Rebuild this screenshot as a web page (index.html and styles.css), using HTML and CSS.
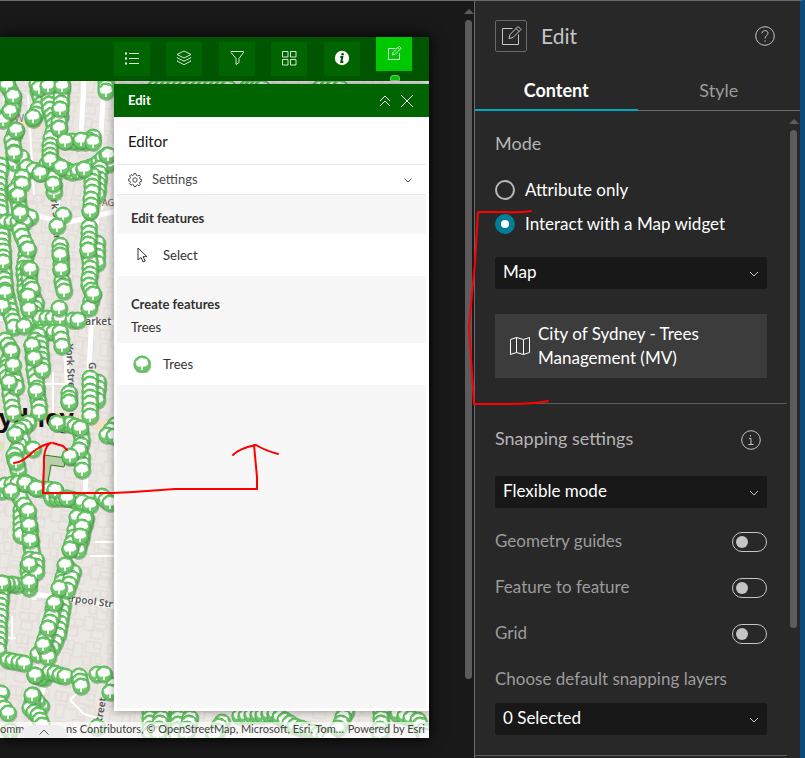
FILE: index.html
```html
<!DOCTYPE html>
<html lang="en">
<head>
    <meta charset="UTF-8">
    <meta name="viewport" content="width=device-width, initial-scale=1.0">
    <title>Edit widget settings</title>
    <link rel="stylesheet" href="styles.css">
</head>
<body>
    <main class="canvas">
        <div class="app">
            <header class="app-header">
                <nav class="toolbar">
                    <button type="button" class="tool" aria-label="Legend">
                        <svg width="16" height="16" viewBox="0 0 16 16"><path d="M5 3.500h10M5 8.500h10M5 13.500h10"/><path class="solid" d="M1 2.500h2v2H1zM1 7.500h2v2H1zM1 12.500h2v2H1z"/></svg>
                    </button>
                    <button type="button" class="tool" aria-label="Layers">
                        <svg width="16" height="16" viewBox="0 0 16 16"><path d="M8 1l7 3.500-7 3.500-7-3.500zM1.500 7.200L1 7.700l7 3.500 7-3.500-.5-.5M1.500 10.500l-.5.500 7 3.700 7-3.700-.5-.5"/></svg>
                    </button>
                    <button type="button" class="tool" aria-label="Filter">
                        <svg width="16" height="16" viewBox="0 0 16 16"><path d="M2 1.500h12.500v1L10 8.500v4l-3 2v-6L2 2.500z"/></svg>
                    </button>
                    <button type="button" class="tool" aria-label="Basemaps">
                        <svg width="16" height="16" viewBox="0 0 16 16"><path d="M1.500 1.500h5.500v5.500H1.500zM9.500 1.500H15v5.500H9.500zM1.500 9.500h5.500V15H1.500zM9.500 9.500H15V15H9.500z"/></svg>
                    </button>
                    <button type="button" class="tool" aria-label="About">
                        <svg width="16" height="16" viewBox="0 0 16 16"><circle class="info-disc" cx="8" cy="8" r="7.200"/><circle class="info-mark" cx="8.600" cy="4.300" r="1.300"/><path class="info-stem" d="M6.300 7h2l-1 5h2"/></svg>
                    </button>
                    <button type="button" class="tool active" aria-label="Edit">
                        <svg width="16" height="16" viewBox="0 0 16 16"><path d="M9.500 3.500H2.500v11h11V8M6.500 10l.7-2.800 6-6 2 2-6 6zM11.800 2.600l2 2"/></svg>
                    </button>
                </nav>
            </header>

            <section class="map">
                <svg class="map-view" viewBox="0 81 429 657" preserveAspectRatio="xMinYMin slice" aria-label="Map of Sydney trees">
                    <defs>
                        <pattern id="blocks" width="46" height="52" patternUnits="userSpaceOnUse" patternTransform="rotate(7)">
                            <path d="M2 3h12v9H2zM14 5h9v14h-9zM26 2h15v11H26zM4 16h8v13H4zM25 17h7v9h-7zM33 15h10v16H33zM3 33h17v7H3zM22 29h9v14h-9zM5 42h11v8H5zM33 35h11v5H33zM30 42h12v8H30zM8 3v9M34 2v6h7M37 15v8h6M12 33v7"/>
                        </pattern>
                        <g id="tree">
                            <circle class="tree-shade" cx=".5" cy="1" r="9"/>
                            <circle class="tree-disc" r="8"/>
                            <path class="tree-glyph" d="M-.9 6V2.200C-3.500 3.500-6 2-5.700 0-7-1.500-5.700-3.500-4-3.700-3.300-6 .6-6.800 2.300-5 4.600-5.600 6-4 5.400-2.200 7-.9 6 1.600 4 1.700 3.200 2.700 2 2.900.9 2.200V6z"/>
                        </g>
                    </defs>
                    <rect class="ground" y="81" width="429" height="657"/>
                    <rect class="buildings" y="81" width="429" height="657"/>
                    <path class="avenue" d="M0 418q60-10 114 12M0 118l42 8"/>
                    <path class="road" d="M-5 205l70 18 60-14M-5 318l130 5M4 81l12 130M48 81l10 130 8 140 2 60M84 81l-3 55M104 81l-5 90-10 200-4 130M0 490l60 8 60 6M28 500l6 100M18 592l60 8 45 8M86 500l-36 160-20 80M-4 660l60 12 70 14"/>
                    <path class="lane" d="M28 95l6 100M53 372v60M40 384h30M110 150l-8 60M12 616v24M6 638h10M90 556h25M95 542h25M70 700l14 14 20 6M70 700l12-12"/>
                    <path class="parkland" d="M44 455l22 3-2 9-13-2-3 17-5-1z"/>
                    <path class="lawn" d="M0 440l4 2v9H0z"/>
                    <text class="district" x="14" y="122">W</text>
                    <text class="district" x="62" y="122">D</text>
                    <text class="landmark" x="102" y="206">AG</text>
                    <text class="city" x="-15" y="427">Sydney</text>
                    <text class="street" transform="translate(49 188) rotate(82)">York St</text>
                    <text class="street" transform="translate(52 226) rotate(80)">Street</text>
                    <text class="street" transform="translate(66 344) rotate(87)">York Street</text>
                    <text class="street" transform="translate(89 362) rotate(92)">George</text>
                    <text class="street" x="76" y="325">Market St</text>
                    <text class="street" transform="translate(51 599) rotate(8)">Liverpool Str</text>
                    <text class="street" transform="translate(101 727) rotate(-80)">Street</text>
                    <g id="trees"></g>
                </svg>

                <section class="panel">
                    <header class="panel-header">
                        <h2>Edit</h2>
                        <button type="button" class="panel-button" aria-label="Collapse">
                            <svg width="14" height="14" viewBox="0 0 14 14"><path d="M2 7l5-5 5 5M2 12l5-5 5 5"/></svg>
                        </button>
                        <button type="button" class="panel-button" aria-label="Close">
                            <svg width="14" height="14" viewBox="0 0 14 14"><path d="M1 1l12 12M13 1L1 13"/></svg>
                        </button>
                    </header>
                    <div class="editor">
                        <h3 class="editor-title">Editor</h3>
                        <button type="button" class="settings">
                            <svg width="14" height="14" viewBox="0 0 14 14"><circle cx="7" cy="7" r="2.200"/><path d="M6 .700h2l.4 1.700 1.200.500 1.500-.9 1.300 1.400-.9 1.500.5 1.100 1.600.4v1.900l-1.600.4-.5 1.200.9 1.500-1.400 1.300-1.500-.9-1.100.5L8 13.500H6l-.4-1.700-1.200-.500-1.500.9-1.300-1.400.9-1.500L2 8.200.4 7.800V6.100L2 5.700l.5-1.200L1.600 3 3 1.600l1.500.9 1.100-.500z"/></svg>
                            <span>Settings</span>
                            <svg width="10" height="10" viewBox="0 0 10 10"><path d="M1.500 3.500L5 7l3.500-3.500"/></svg>
                        </button>
                        <h4 class="group-title">Edit features</h4>
                        <button type="button" class="feature">
                            <svg width="18" height="18" viewBox="0 0 18 18"><path d="M5 2v12l3-2.500 2.200 4.500 2-1-2.200-4.300H14z"/></svg>
                            Select
                        </button>
                        <h4 class="group-title create">Create features</h4>
                        <p class="layer-name">Trees</p>
                        <button type="button" class="feature">
                            <svg class="tree-icon" width="18" height="18" viewBox="-9 -9 18 18"><use href="#tree"/></svg>
                            Trees
                        </button>
                    </div>
                </section>

                <footer class="attribution">
                    <span class="source-start">omm</span>
                    <span class="sources">ns Contributors, © OpenStreetMap, Microsoft, Esri, Tom…</span>
                    <span>Powered by Esri</span>
                </footer>
                <button type="button" class="drawer" aria-label="Expand">
                    <svg width="12" height="8" viewBox="0 0 12 8"><path d="M1.500 6.500L6 2l4.500 4.500"/></svg>
                </button>
            </section>
        </div>
        <div class="scrollbar canvas-scroll"><div class="thumb"></div></div>
    </main>

    <aside class="sidebar">
        <header class="sidebar-header">
            <span class="widget-icon">
                <svg width="22" height="22" viewBox="0 0 22 22"><path d="M12.500 3.500h-10v16h16v-10M9 13.500l1-4 8-8 3 3-8 8zM16 3.500l3 3"/></svg>
            </span>
            <h1>Edit</h1>
            <button type="button" class="round-button" aria-label="Help">
                <svg width="20" height="20" viewBox="0 0 20 20"><circle cx="10" cy="10" r="9.300"/><path d="M7 7.500c0-4 6-3.800 6-.3 0 2.300-3 2.500-3 5.300M10 14.300v1.500"/></svg>
            </button>
        </header>
        <div class="tabs" role="tablist">
            <button type="button" class="tab selected" role="tab" aria-selected="true">Content</button>
            <button type="button" class="tab" role="tab" aria-selected="false">Style</button>
        </div>
        <div class="sidebar-body">
            <form class="options">
                <section class="block">
                    <h2 class="block-title">Mode</h2>
                    <label class="radio"><input type="radio" name="mode"><span>Attribute only</span></label>
                    <label class="radio"><input type="radio" name="mode" checked><span>Interact with a Map widget</span></label>
                    <select class="dropdown map-select" aria-label="Map widget">
                        <option>Map</option>
                    </select>
                    <div class="map-card">
                        <svg width="20" height="18" viewBox="0 0 20 18"><path d="M.5 2.500l6-2 7 2 6-2v15l-6 2-7-2-6 2zM6.500.5v15M13.500 2.500v15"/></svg>
                        <span>City of Sydney - Trees Management (MV)</span>
                    </div>
                </section>
                <section class="block">
                    <div class="title-row">
                        <h2 class="block-title">Snapping settings</h2>
                        <button type="button" class="round-button" aria-label="About snapping">
                            <svg width="20" height="20" viewBox="0 0 20 20"><circle cx="10" cy="10" r="9.300"/><path d="M8 8.500h2v6M7.500 14.500h5M9.500 5v1.500"/></svg>
                        </button>
                    </div>
                    <select class="dropdown" aria-label="Snapping mode">
                        <option>Flexible mode</option>
                    </select>
                    <div class="switches">
                        <label class="switch-row"><span>Geometry guides</span><input type="checkbox" class="switch"></label>
                        <label class="switch-row"><span>Feature to feature</span><input type="checkbox" class="switch"></label>
                        <label class="switch-row"><span>Grid</span><input type="checkbox" class="switch"></label>
                    </div>
                    <label class="field-label" for="layers">Choose default snapping layers</label>
                    <select class="dropdown" id="layers">
                        <option>0 Selected</option>
                    </select>
                </section>
            </form>
            <div class="scrollbar"><div class="thumb"></div></div>
        </div>
    </aside>

    <svg class="markup" width="805" height="758" viewBox="0 0 805 758" aria-hidden="true">
        <path d="M14 463q8 0 20-12 10-7 17-8M53 443l10 3 4 4M50 443q-7 6-6 22l-1 28h70l20-1 42-3h82v-12l-3-32M233 455q7-7 23-10 8 5 22 9"/>
        <path d="M531 211q-12 2-25 1h-28l-3 50-6 65 2 30 3 47h30q30 0 44-3"/>
    </svg>

    <script src="trees.js"></script>
</body>
</html>
```
FILE: styles.css
```css
* {
    box-sizing: border-box;
}
body {
    display: flex;
    min-height: 100vh;
    margin: 0;
    border-top: 1px solid #6a6a6a;
    border-right: 5px solid #0d4a7c;
    background-color: #191919;
    font-family: Lato, "Open Sans", sans-serif;
    font-size: 17px;
}
h1, h2, h3, h4, p {
    margin: 0;
    font-weight: normal;
}
button {
    padding: 0;
    border: none;
    background: none;
    color: inherit;
    font: inherit;
    cursor: pointer;
}
svg {
    display: block;
    fill: none;
    stroke: currentColor;
}

/* Canvas */
.canvas {
    display: flex;
    flex: 1;
    min-width: 0;
}
.app {
    display: flex;
    flex: 1;
    flex-direction: column;
    min-width: 0;
    margin: 36px 34px 20px 0;
    box-shadow: 0 0 14px #000;
}
.app-header {
    display: flex;
    justify-content: flex-end;
    height: 44px;
    padding-right: 17px;
    background-color: #005500;
}
.toolbar {
    display: flex;
    justify-content: space-between;
    width: 298px;
    padding-top: 5px;
}
.tool {
    display: flex;
    align-items: center;
    justify-content: center;
    width: 36px;
    height: 34px;
    padding-bottom: 2px;
    background-color: #006400;
    color: #d5e8d5;
}
.tool .solid,
.info-disc {
    fill: #fff;
    stroke: none;
}
.info-mark {
    fill: #005500;
    stroke: none;
}
.info-stem {
    stroke: #005500;
    stroke-width: 2;
}
.tool.active {
    position: relative;
    margin-top: -5px;
    background-color: #00c800;
}
.tool.active::after {
    position: absolute;
    bottom: -10px;
    left: 14px;
    width: 8px;
    height: 4px;
    border: 1px solid #7fb27f;
    border-radius: 3px 3px 0 0;
    background-color: #00c800;
    content: "";
}

/* Map */
.map {
    position: relative;
    display: flex;
    flex: 1;
    flex-direction: column;
    overflow: hidden;
}
.map-view {
    position: absolute;
    inset: 0;
    width: 100%;
    height: 100%;
    stroke: none;
}
.ground {
    fill: #ebe7e3;
}
.buildings {
    fill: url(#blocks);
}
#blocks path {
    stroke: #dfd9d3;
    stroke-width: 1;
}
.road {
    stroke: #fff;
    stroke-width: 5;
}
.lane {
    stroke: #fff;
    stroke-width: 2;
}
.avenue {
    stroke: #f7dfc5;
    stroke-width: 9;
}
.parkland {
    fill: #bccdaa;
    stroke: #27801c;
}
.lawn {
    fill: #dfe3bd;
}
.map-view text {
    font-family: "Noto Sans", sans-serif;
}
.map-view .street {
    fill: #555;
    font-size: 10px;
    font-weight: 600;
}
.map-view .district {
    fill: #777a99;
    font-size: 11px;
}
.map-view .landmark {
    fill: #765646;
    font-size: 9px;
}
.map-view .city {
    fill: #111;
    font-size: 25px;
    font-weight: bold;
}
.tree-shade {
    fill: #4c8a4c88;
    stroke: none;
}
.tree-disc {
    fill: #6fc76c;
    stroke: #5ab959;
}
.tree-glyph {
    fill: #fff;
    stroke: none;
}

/* Edit panel */
.panel {
    position: relative;
    display: flex;
    flex: 1;
    flex-direction: column;
    align-self: flex-end;
    width: 315px;
    margin: 3px 0 27px;
    background-color: #fff;
    box-shadow: 0 0 8px #0006;
    color: #323232;
    font-size: 13px;
}
.panel-header {
    display: flex;
    align-items: center;
    gap: 8px;
    height: 33px;
    padding: 0 15px 0 14px;
    background-color: #006400;
    color: #fff;
}
.panel-header h2 {
    flex: 1;
    padding-bottom: 2px;
    font-size: 13px;
    font-weight: bold;
}
.editor {
    flex: 1;
    margin: 0 3px 3px;
    background-color: #f7f7f7;
}
.editor-title {
    height: 47px;
    padding-left: 11px;
    background-color: #fff;
    color: #151515;
    font-size: 15px;
    line-height: 48px;
}
.settings {
    display: flex;
    align-items: center;
    gap: 10px;
    width: 100%;
    height: 31px;
    padding: 0 13px 0 11px;
    border: solid #eaeaea;
    border-width: 1px 0;
    background-color: #fff;
    color: #4a4a4a;
    text-align: left;
}
.settings span {
    flex: 1;
    padding-bottom: 2px;
}
.group-title {
    padding: 14px 14px 7px;
    font-weight: bold;
    line-height: 18px;
}
.group-title.create {
    padding: 19px 14px 5px;
}
.layer-name {
    padding: 0 14px 7px;
    line-height: 18px;
}
.feature {
    display: flex;
    align-items: center;
    gap: 12px;
    width: 100%;
    height: 42px;
    padding: 0 0 1px 16px;
    background-color: #fff;
}
.tree-icon {
    stroke: none;
}
.attribution {
    position: absolute;
    right: 0;
    bottom: 0;
    left: 0;
    display: flex;
    padding: 0 4px 2px 0;
    background-color: #ffffffb0;
    color: #404040;
    font-size: 11px;
    line-height: 14px;
    white-space: nowrap;
}
.source-start {
    width: 66px;
}
.sources {
    flex: 1;
}
.drawer {
    position: absolute;
    bottom: 0;
    left: 20px;
    display: flex;
    align-items: center;
    justify-content: center;
    width: 48px;
    height: 13px;
    border-radius: 14px 14px 0 0;
    background-color: #eee;
    color: #555;
}

/* Scrollbars */
.scrollbar {
    display: flex;
    flex-direction: column;
    align-items: center;
    gap: 6px;
    width: 13px;
    padding-top: 8px;
}
.scrollbar::before {
    border: 5px solid transparent;
    border-top: none;
    border-bottom-color: #5c5c5c;
    content: "";
}
.scrollbar .thumb {
    width: 7px;
    height: 78%;
    border-radius: 4px;
    background-color: #5c5c5c;
}
.canvas-scroll {
    width: 11px;
}
.canvas-scroll .thumb {
    height: 88%;
}

/* Settings sidebar */
.sidebar {
    display: flex;
    flex-direction: column;
    width: 326px;
    border-left: 1px solid #6a6a6a;
    background-color: #282828;
    color: #fff;
}
.sidebar-header {
    display: flex;
    align-items: center;
    gap: 14px;
    height: 70px;
    padding: 0 25px 0 20px;
    color: #c5c5c5;
}
.sidebar-header h1 {
    flex: 1;
    padding-bottom: 2px;
    font-size: 21px;
}
.widget-icon {
    display: flex;
    align-items: center;
    justify-content: center;
    width: 32px;
    height: 32px;
    border: 1px solid #6a6a6a;
    border-radius: 2px;
}
.tabs {
    display: flex;
    border-bottom: 1px solid #6a6a6a;
}
.tab {
    flex: 1;
    height: 40px;
    margin-bottom: -1px;
    border-bottom: 2px solid transparent;
    color: #9c9c9c;
    font-size: 18px;
}
.tab.selected {
    border-color: #00aabb;
    color: #fff;
    font-weight: bold;
}
.sidebar-body {
    display: flex;
    flex: 1;
}
.options {
    flex: 1;
}
.block {
    padding: 20px 20px 25px;
    border-bottom: 1px solid #5c5c5c;
}
.block + .block {
    padding-bottom: 20px;
}
.block-title {
    color: #b5b5b5;
    font-size: 18px;
    line-height: 24px;
}
.radio {
    display: flex;
    align-items: center;
    gap: 10px;
    height: 34px;
}
.radio span {
    padding-bottom: 2px;
}
.block-title + .radio {
    margin-top: 18px;
}
.radio input {
    width: 20px;
    height: 20px;
    margin: 0;
    border: 2px solid #b8b8b8;
    border-radius: 50%;
    appearance: none;
}
.radio input:checked {
    border: 6px solid #007e95;
    background-color: #fff;
}
.dropdown {
    display: block;
    width: 100%;
    height: 32px;
    padding: 0 30px 4px 8px;
    border: none;
    border-radius: 2px;
    background: #181818 url("data:image/svg+xml,%3Csvg xmlns='http://www.w3.org/2000/svg' width='10' height='6' fill='none' stroke='%23c5c5c5'%3E%3Cpath d='M1 1l4 4 4-4'/%3E%3C/svg%3E") no-repeat right 8px top 14px;
    color: #fff;
    font: inherit;
    appearance: none;
}
.map-select {
    margin: 16px 0 25px;
}
.map-card {
    display: flex;
    align-items: center;
    gap: 8px;
    padding: 8px 15px;
    background-color: #3c3c3c;
    line-height: 24px;
}
.map-card svg {
    flex: none;
}
.title-row {
    display: flex;
    align-items: center;
    justify-content: space-between;
    margin: 2px 6px 23px 0;
}
.title-row .block-title {
    padding-bottom: 3px;
}
.round-button {
    color: #c5c5c5;
}
.switches {
    padding-top: 11px;
}
.switch-row {
    display: flex;
    align-items: center;
    justify-content: space-between;
    height: 46px;
    color: #9c9c9c;
}
.switch-row span {
    padding-bottom: 3px;
}
.switch {
    width: 35px;
    height: 20px;
    margin: 0;
    padding: 3px;
    border: 1px solid #c5c5c5;
    border-radius: 10px;
    appearance: none;
}
.switch::before {
    display: block;
    width: 12px;
    height: 12px;
    border-radius: 50%;
    background-color: #c5c5c5;
    content: "";
}
.switch:checked::before {
    margin-left: auto;
}
.field-label {
    display: block;
    padding: 10px 0 12px;
    color: #9c9c9c;
    line-height: 24px;
}

/* Hand-drawn notes over the whole page */
.markup {
    position: absolute;
    top: 0;
    left: 0;
    stroke: #f00;
    stroke-linecap: round;
    stroke-linejoin: round;
    stroke-width: 2;
    pointer-events: none;
}
```
FILE: trees.js
```js
// Each row is a line of street trees: x, y, x, y, ...
const rows = [
    [7, 84, 13, 96, 12, 108, 3, 120],
    [37, 84, 41, 104, 33, 119],
    [48, 82, 49, 104, 54, 125, 50, 145, 50, 160],
    [62, 84, 60, 109, 59, 128],
    [106, 82, 106, 91],
    [93, 137, 85, 142, 65, 141],
    [16, 130, 12, 140, 15, 163, 21, 157],
    [27, 167, 40, 173, 50, 160, 61, 167, 72, 172, 84, 169, 95, 165, 107, 155],
    [108, 164, 100, 168, 97, 195],
    [92, 175, 92, 186, 90, 211],
    [53, 178, 54, 192],
    [22, 177, 15, 190, 20, 212, 30, 217],
    [0, 165, -2, 190, 0, 212],
    [0, 222, 24, 222],
    [2, 235, 3, 262, 5, 290, 10, 310, 14, 327],
    [20, 230, 27, 249, 24, 268, 25, 290, 29, 309],
    [28, 268, 30, 290, 36, 303, 33, 318, 24, 326],
    [40, 318, 60, 318],
    [42, 332, 60, 332, 62, 346],
    [60, 245, 61, 270],
    [62, 281, 64, 291],
    [73, 320, 78, 320],
    [97, 243, 97, 263],
    [89, 227, 88, 250, 90, 262, 89, 285, 93, 294, 89, 308],
    [5, 340, 11, 350, 5, 372, 9, 382, 11, 400, 13, 413],
    [13, 375, 16, 387],
    [38, 335, 32, 345, 35, 375, 38, 400, 39, 412],
    [40, 343, 42, 370],
    [69, 393, 69, 402],
    [98, 382, 97, 400],
    [90, 378, 90, 416],
    [115, 425, 107, 435, 114, 436],
    [28, 423, 15, 434, 22, 440, 14, 455, 18, 470],
    [57, 423, 70, 424, 80, 428, 82, 440, 79, 450],
    [70, 457, 82, 457, 82, 470],
    [2, 491, 5, 485, 25, 482, 36, 488, 55, 490],
    [52, 498, 67, 498, 82, 502, 90, 505],
    [102, 496, 110, 503],
    [21, 510, 21, 535],
    [20, 498, 27, 511, 29, 525, 32, 552, 28, 565, 29, 588],
    [36, 560, 36, 572],
    [86, 518, 82, 535, 78, 550],
    [78, 517, 74, 537, 70, 549],
    [66, 565, 60, 588],
    [73, 572, 67, 590],
    [17, 585, 2, 583, 0, 605, -2, 650],
    [63, 605, 58, 635, 52, 648, 38, 654],
    [55, 603, 48, 628, 44, 645, 48, 657],
    [8, 660, 24, 663],
    [44, 678, 35, 675],
    [50, 672, 65, 676],
    [79, 676, 81, 686],
    [97, 674, 104, 674],
    [114, 685, 110, 692],
    [1, 693],
    [-1, 703, 8, 713],
    [41, 706, 33, 695, 30, 708, 38, 715, 42, 725],
    [10, 731],
    [97, 727],
    [150, 712, 150, 734],
    [162, 712, 158, 734],
    [178, 712, 177, 736],
    [190, 718, 186, 734],
    [240, 716, 275, 714, 295, 726, 330, 738],
    [222, 722, 214, 735],
    [346, 712, 338, 728],
    [381, 712, 380, 734],
    [398, 714, 418, 720, 425, 736],
    [155, 88, 228, 88],
    [247, 88, 262, 88],
    [320, 88, 340, 88]
];

const single = [
    [7, 85], [13, 96], [10, 111], [39, 88], [33, 117], [48, 86], [62, 86], [60, 109],
    [59, 128], [65, 141], [81, 140], [93, 142], [16, 130], [14, 153], [40, 173],
    [50, 160], [61, 167], [84, 169], [108, 155], [22, 184], [18, 195], [20, 213],
    [53, 184], [90, 211], [63, 215], [57, 226], [3, 262], [5, 292], [2, 306],
    [28, 249], [30, 269], [32, 289], [28, 296], [29, 309], [60, 255], [61, 269],
    [59, 308], [88, 250], [93, 294], [11, 351], [13, 365], [9, 382], [32, 345],
    [34, 358], [36, 391], [69, 402], [15, 434], [33, 449], [16, 462], [57, 423],
    [80, 428], [79, 450], [70, 456], [11, 491], [25, 483], [36, 488], [55, 490],
    [67, 498], [28, 511], [29, 525], [30, 540], [29, 564], [77, 517], [85, 519],
    [82, 527], [80, 536], [70, 549], [65, 565], [29, 582], [2, 583], [59, 588],
    [54, 603], [48, 628], [43, 645], [35, 675], [32, 695]
];

const layer = document.getElementById('trees');

function addTree(x, y) {
    const tree = document.createElementNS('http://www.w3.org/2000/svg', 'use');
    tree.setAttribute('href', '#tree');
    tree.setAttribute('x', Math.round(x));
    tree.setAttribute('y', Math.round(y));
    layer.appendChild(tree);
}

rows.forEach(row => {
    addTree(row[0], row[1]);
    for (let i = 2; i < row.length; i += 2) {
        const dx = row[i] - row[i - 2];
        const dy = row[i + 1] - row[i - 1];
        const steps = Math.max(1, Math.round(Math.hypot(dx, dy) / 6));
        for (let s = 1; s <= steps; s++) {
            addTree(row[i - 2] + dx * s / steps, row[i - 1] + dy * s / steps);
        }
    }
});

single.forEach(([x, y]) => addTree(x, y));
```
